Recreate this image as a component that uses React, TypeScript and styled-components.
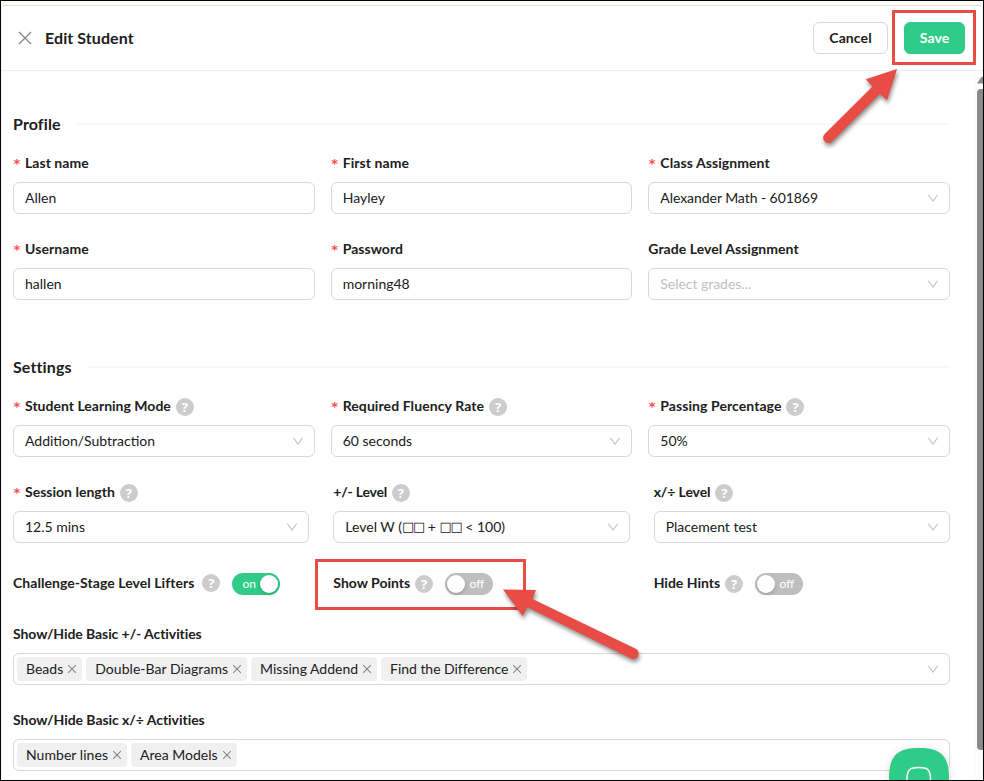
import React from "react";
import styled, { createGlobalStyle } from "styled-components";

const GREEN = "#2fcb89";
const RED = "#e94b45";

const GlobalStyle = createGlobalStyle`
  * { box-sizing: border-box; }
  body {
    margin: 0;
    background: #fff;
    color: #202020;
    font-family: Lato, "Liberation Sans", sans-serif;
    font-size: 14px;
    line-height: 22px;
    overflow: hidden;
  }
`;

const Frame = styled.div`
  position: relative;
  display: flex;
  flex-direction: column;
  width: 984px;
  height: 781px;
  border: 1px solid #000;
  overflow: hidden;
`;

const TopStrip = styled.div`
  flex: none;
  height: 5px;
  background: #fffffa;
  border-bottom: 1px solid #e3e2d6;
`;

const Header = styled.header`
  flex: none;
  display: flex;
  align-items: center;
  height: 65px;
  padding: 0 18px 0 16px;
  border-bottom: 1px solid #efefef;
`;

const CloseButton = styled.button`
  display: flex;
  padding: 0;
  margin-right: 12px;
  border: 0;
  background: none;
  color: #858585;
`;

const Title = styled.h1`
  flex: 1;
  margin: 0;
  font-size: 16px;
  line-height: 24px;
  font-weight: 700;
  letter-spacing: 0.08px;
`;

const Button = styled.button<{ $primary?: boolean }>`
  height: 32px;
  width: ${(p) => (p.$primary ? 61 : 75)}px;
  margin-left: ${(p) => (p.$primary ? 16 : 0)}px;
  padding: 0;
  border: 1px solid ${(p) => (p.$primary ? GREEN : "#d9d9d9")};
  border-radius: 6px;
  background: ${(p) => (p.$primary ? GREEN : "#fff")};
  color: ${(p) => (p.$primary ? "#fff" : "#202020")};
  font: 700 14px/22px Lato, sans-serif;
  letter-spacing: 0.1px;
`;

const Body = styled.div`
  flex: 1;
  min-height: 0;
  display: flex;
`;

const Form = styled.main`
  flex: 1;
  padding: 41px 24px 0 12px;
`;

const ScrollTrack = styled.div`
  display: flex;
  flex-direction: column;
  width: 9px;
  padding: 5px 0 0 3px;
  background: #fcfcfc;
`;

const ScrollThumb = styled.div`
  height: 661px;
  margin-top: 5px;
  border-radius: 4px 0 0 4px;
  background: #8a8a8a;
`;

const SectionTitle = styled.h2<{ $spaced?: boolean }>`
  display: flex;
  align-items: center;
  gap: 16px;
  height: 24px;
  margin: ${(p) => (p.$spaced ? "55px" : "0")} 0 16px;
  font-size: 16px;
  line-height: 24px;
  font-weight: 700;
  letter-spacing: 0.12px;
  &::after {
    content: "";
    flex: 1;
    height: 2px;
    background: #f8f8f8;
  }
`;

const Row = styled.div<{ $gap: number }>`
  display: grid;
  grid-template-columns: repeat(3, 1fr);
  column-gap: ${(p) => p.$gap}px;
  margin-bottom: 24px;
`;

const Block = styled.div`
  margin-bottom: 24px;
`;

const Label = styled.label<{ $track?: number }>`
  display: flex;
  align-items: center;
  height: 22px;
  margin-bottom: 8px;
  font-weight: 700;
  letter-spacing: ${(p) => p.$track ?? 0.04}px;
  white-space: nowrap;
`;

const Star = styled.span`
  width: 8px;
  margin-right: 4px;
  padding-top: 2px;
  color: #ff4d4f;
  font: 700 13px/22px "DejaVu Sans Mono", monospace;
`;

const Help = styled.span<{ $far?: boolean }>`
  display: flex;
  align-items: center;
  justify-content: center;
  width: 18px;
  height: 18px;
  margin: ${(p) => (p.$far ? "0 0 0 8px" : "1px 0 0 5px")};
  border-radius: 50%;
  background: #ccc;
  color: #fff;
  font: 700 13px/18px "Open Sans", sans-serif;
  letter-spacing: 0;
`;

const Control = styled.div<{ $muted?: boolean }>`
  display: flex;
  align-items: center;
  justify-content: space-between;
  height: 32px;
  padding: 0 10px 0 11px;
  border: 1px solid #d9d9d9;
  border-radius: 6px;
  color: ${(p) => (p.$muted ? "#bfbfbf" : "#202020")};
`;

const Value = styled.span<{ $track?: number }>`
  letter-spacing: ${(p) => p.$track ?? 0}px;
`;

const Boxes = styled.span`
  font: 400 13px/18px "DejaVu Sans", sans-serif;
  letter-spacing: -1.2px;
  vertical-align: 1px;
`;

const TagControl = styled(Control)`
  padding-left: 3px;
`;

const Tags = styled.div`
  display: flex;
  gap: 4px;
`;

const Tag = styled.span<{ $track?: number }>`
  display: flex;
  align-items: center;
  gap: 4px;
  height: 24px;
  padding: 0 5px 0 9px;
  border-radius: 4px;
  background: #f0f0f0;
  color: #202020;
  letter-spacing: ${(p) => p.$track ?? 0}px;
  svg { color: #858585; }
`;

const SwitchItem = styled.div<{ $track?: number }>`
  display: flex;
  align-items: center;
  height: 32px;
  font-weight: 700;
  letter-spacing: ${(p) => p.$track ?? 0}px;
`;

const Toggle = styled.span<{ $on?: boolean }>`
  display: flex;
  flex-direction: ${(p) => (p.$on ? "row" : "row-reverse")};
  align-items: center;
  justify-content: space-between;
  width: 48px;
  height: 22px;
  margin: 2px 0 0 12px;
  padding: ${(p) => (p.$on ? "0 2px 0 10px" : "0 9px 0 2px")};
  border-radius: 11px;
  background: ${(p) => (p.$on ? GREEN : "#bfbfbf")};
  color: #fff;
  font-size: 12px;
  font-weight: 400;
  letter-spacing: 0;
  &::after {
    content: "";
    width: 18px;
    height: 18px;
    border-radius: 50%;
    background: #fff;
    box-shadow: 0 2px 4px rgba(0, 35, 11, 0.2);
  }
`;

const Highlight = styled.div<{ $x: number; $y: number; $w: number; $h: number }>`
  position: absolute;
  left: ${(p) => p.$x}px;
  top: ${(p) => p.$y}px;
  width: ${(p) => p.$w}px;
  height: ${(p) => p.$h}px;
  border: 3px solid ${RED};
`;

const ArrowLayer = styled.svg`
  position: absolute;
  left: -1px;
  top: -1px;
  filter: drop-shadow(1px 3px 2px rgba(0, 0, 0, 0.45));
`;

const ChatButton = styled.div`
  position: absolute;
  left: 888px;
  top: 747px;
  filter: drop-shadow(0 1px 4px rgba(0, 0, 0, 0.12));
  svg { display: block; }
`;

const Cross = ({ size, inset, stroke }: { size: number; inset: number; stroke: number }) => (
  <svg width={size} height={size} fill="none" stroke="currentColor" strokeWidth={stroke}>
    <path d={`M${inset} ${inset}L${size - inset} ${size - inset}M${size - inset} ${inset}L${inset} ${size - inset}`} />
  </svg>
);

const Chevron = () => (
  <svg width="12" height="12" fill="none" stroke="#bfbfbf" strokeWidth="1.05">
    <path d="M1.300 2.700L6 9.100L10.700 2.700" />
  </svg>
);

type FieldProps = {
  label: string;
  value: React.ReactNode;
  required?: boolean;
  help?: boolean;
  select?: boolean;
  muted?: boolean;
  labelTrack?: number;
  valueTrack?: number;
};

const Field = ({ label, value, required, help, select, muted, labelTrack, valueTrack }: FieldProps) => (
  <div>
    <Label $track={labelTrack}>
      {required && <Star>*</Star>}
      {label}
      {help && <Help>?</Help>}
    </Label>
    <Control $muted={muted}>
      <Value $track={valueTrack}>{value}</Value>
      {select && <Chevron />}
    </Control>
  </div>
);

type SwitchProps = { label: string; on?: boolean; far?: boolean; track?: number };

const SwitchField = ({ label, on, far, track }: SwitchProps) => (
  <SwitchItem $track={track}>
    {label}
    <Help $far={far}>?</Help>
    <Toggle $on={on}>{on ? "on" : "off"}</Toggle>
  </SwitchItem>
);

type TagItem = { text: string; track?: number };

const TagField = ({ label, tags, track }: { label: string; tags: TagItem[]; track?: number }) => (
  <Block>
    <Label $track={track}>{label}</Label>
    <TagControl>
      <Tags>
        {tags.map((t) => (
          <Tag key={t.text} $track={t.track}>
            {t.text}
            <Cross size={10} inset={1.2} stroke={1.1} />
          </Tag>
        ))}
      </Tags>
      <Chevron />
    </TagControl>
  </Block>
);

const levelW = (
  <>
    Level W (<Boxes>□□</Boxes> + <Boxes>□□</Boxes> &lt; 100)
  </>
);

export default function App() {
  return (
    <>
      <GlobalStyle />
      <Frame>
        <TopStrip />
        <Header>
          <CloseButton aria-label="Close">
            <Cross size={16} inset={2} stroke={1.3} />
          </CloseButton>
          <Title>Edit Student</Title>
          <Button>Cancel</Button>
          <Button $primary>Save</Button>
        </Header>
        <Body>
          <Form>
            <SectionTitle>Profile</SectionTitle>
            <Row $gap={16}>
              <Field label="Last name" value="Allen" required />
              <Field label="First name" value="Hayley" required labelTrack={0.08} />
              <Field
                label="Class Assignment"
                value="Alexander Math - 601869"
                required
                select
                labelTrack={0.08}
                valueTrack={-0.06}
              />
            </Row>
            <Row $gap={16}>
              <Field label="Username" value="hallen" required labelTrack={0.1} />
              <Field label="Password" value="morning48" required />
              <Field label="Grade Level Assignment" value="Select grades..." select muted valueTrack={-0.04} />
            </Row>
            <SectionTitle $spaced>Settings</SectionTitle>
            <Row $gap={16}>
              <Field label="Student Learning Mode" value="Addition/Subtraction" required help select labelTrack={0.01} />
              <Field label="Required Fluency Rate" value="60 seconds" required help select labelTrack={0.09} />
              <Field label="Passing Percentage" value="50%" required help select labelTrack={0.07} />
            </Row>
            <Row $gap={24}>
              <Field label="Session length" value="12.5 mins" required help select labelTrack={0.01} />
              <Field label="+/- Level" value={levelW} help select labelTrack={-0.22} />
              <Field label="x/÷ Level" value="Placement test" help select labelTrack={-0.1} />
            </Row>
            <Row $gap={24}>
              <SwitchField label="Challenge-Stage Level Lifters" on far track={0.05} />
              <SwitchField label="Show Points" />
              <SwitchField label="Hide Hints" />
            </Row>
            <TagField
              label="Show/Hide Basic +/- Activities"
              track={-0.08}
              tags={[
                { text: "Beads" },
                { text: "Double-Bar Diagrams", track: 0.05 },
                { text: "Missing Addend" },
                { text: "Find the Difference", track: -0.04 },
              ]}
            />
            <TagField
              label="Show/Hide Basic x/÷ Activities"
              track={-0.05}
              tags={[{ text: "Number lines", track: 0.05 }, { text: "Area Models" }]}
            />
          </Form>
          <ScrollTrack>
            <svg width="6" height="8" fill="#8a8a8a">
              <path d="M0 7.500L4 1.500Q5 0.500 6 1V7.500Z" />
            </svg>
            <ScrollThumb />
          </ScrollTrack>
        </Body>

        <ChatButton>
          <svg width="60" height="60" fill="none">
            <path d="M30 0C52 0 60 8 60 30S52 60 30 60 0 52 0 30 8 0 30 0Z" fill={GREEN} />
            <path d="M18 42V31C18 21.500 21 19.500 29.750 19.500S41.500 21.500 41.500 31V42" stroke="#fff" strokeWidth="1.5" />
          </svg>
        </ChatButton>
        <Highlight $x={891} $y={9} $w={84} $h={55} />
        <Highlight $x={314} $y={558} $w={211} $h={51} />
        <ArrowLayer width="984" height="781" fill={RED}>
          <path d="M897 69L865.700 79.300L872.500 86.500L824.700 134A5.300 5.300 0 0 0 832.200 141.500L880 93.700L887 100.300Z" />
          <path d="M503 589.500L536 590L532.500 599L635.700 648.800A5.300 5.300 0 0 1 631 658.500L527.500 607.300L522.700 616Z" />
        </ArrowLayer>
      </Frame>
    </>
  );
}
